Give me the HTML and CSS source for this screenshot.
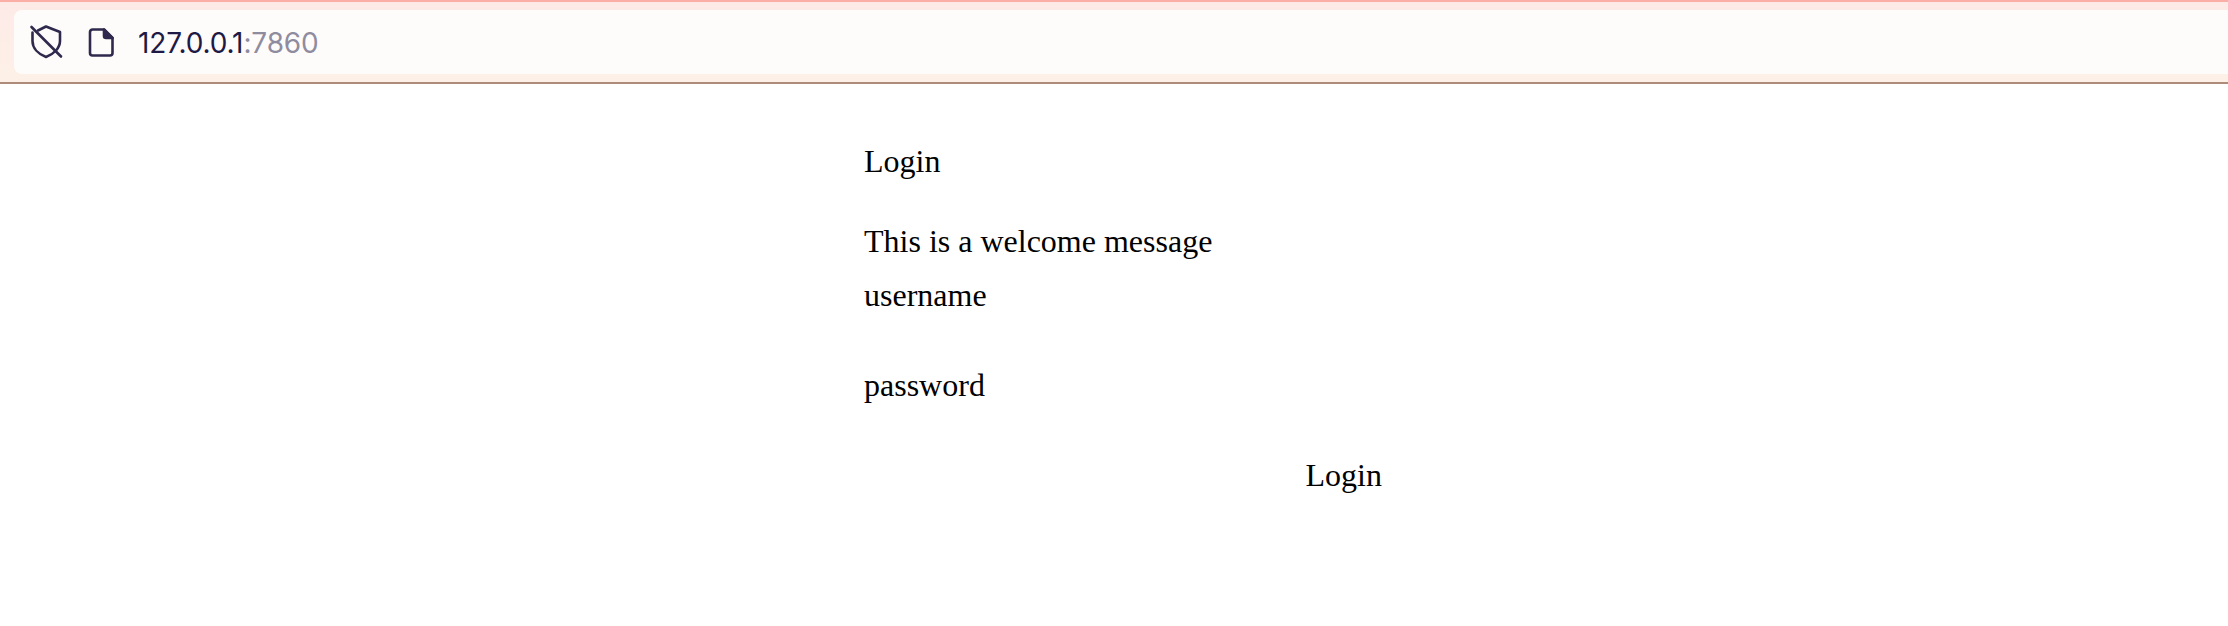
FILE: index.html
```html
<!DOCTYPE html>
<html>
<head>
    <title>Login</title>
    <meta charset="utf-8">
    <link rel="stylesheet" href="styles.css">
</head>
<body>
    <div class="toolbar">
        <div class="urlbar">
            <svg class="icon-shield" width="36" height="36" viewBox="0 0 36 36" fill="none" stroke="#2f2a4d" stroke-width="2.6" stroke-linecap="round" stroke-linejoin="round">
                <path d="M10 6.5 L18 2.5 L32 8 V17 C32 24 26 30 18 33 C10 30 4.5 24 4.5 17 V8.5"/>
                <path d="M3.5 3 L33 32.5"/>
            </svg>
            <svg class="icon-page" width="26" height="29" viewBox="0 0 26 29" fill="none" stroke="#2f2a4d" stroke-width="2.6" stroke-linejoin="round">
                <path d="M4.5 1.5 H16 L24.5 10 V25 A2.5 2.5 0 0 1 22 27.5 H4.5 A2.5 2.5 0 0 1 2 25 V4 A2.5 2.5 0 0 1 4.5 1.5 Z"/>
                <path d="M16 1.5 L24.5 10 H18 A2 2 0 0 1 16 8 Z" fill="#2f2a4d"/>
            </svg>
            <span class="host">127.0.0.1</span><span class="port">:7860</span>
        </div>
    </div>

    <div class="login">
        <div class="title">Login</div>
        <div class="message">This is a welcome message</div>
        <div class="field">username</div>
        <div class="field">password</div>
        <div class="actions">
            <div class="button">Login</div>
        </div>
    </div>
</body>
</html>
```

FILE: styles.css
```css
body {
    font-family: "Liberation Serif", "Times New Roman", serif;
    background-color: white;
    color: black;
    margin: 0;
    padding: 0;
}

.toolbar {
    height: 64px;
    padding: 8px 0 8px 14px;
    border-top: 2px solid #fbaea5;
    border-bottom: 2px solid #ae8c7a;
    background: linear-gradient(#fdeae7, #fdf1e7);
}

.urlbar {
    height: 64px;
    display: flex;
    align-items: center;
    padding-left: 14px;
    background-color: #fefcfa;
    border-radius: 8px 0 0 8px;
    font-family: Inter, sans-serif;
    font-size: 28px;
    letter-spacing: -0.12px;
}

.icon-page {
    margin-left: 24px;
    margin-right: 24px;
}

.host {
    color: #1f1a45;
    margin-top: 2px;
}

.port {
    color: #8f8ca0;
    margin-top: 2px;
}

.login {
    width: 518px;
    margin: 0 auto;
    padding-top: 50px;
    padding-left: 18px;
    font-size: 32px;
    line-height: 54px;
}

.title {
    margin-bottom: 26px;
}

.field {
    height: 90px;
}

.actions {
    display: flex;
    justify-content: flex-end;
}
```
